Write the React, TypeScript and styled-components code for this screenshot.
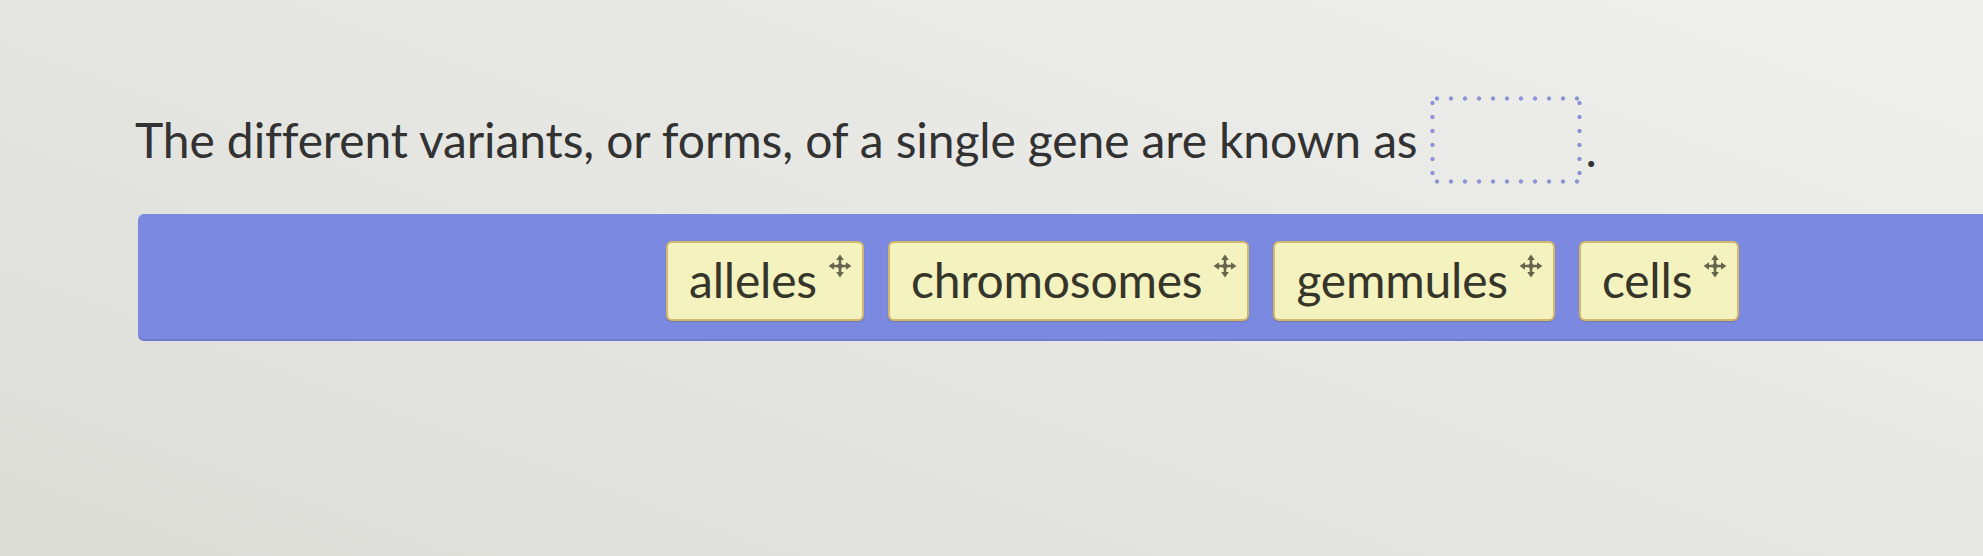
import React from "react";
import styled, { createGlobalStyle } from "styled-components";

const Global = createGlobalStyle`
  html, body { margin: 0; padding: 0; }
  body { font-family: Lato, "Open Sans", sans-serif; overflow: hidden; }
`;

const Page = styled.div`
  width: 1983px;
  height: 556px;
  box-sizing: border-box;
  padding: 96px 0 0 135px;
  background: linear-gradient(200deg, #efefed 0%, #e7e7e4 45%, #dcdcd7 100%);
  display: flex;
  flex-direction: column;
`;

const Question = styled.p`
  margin: 0;
  font-size: 48px;
  line-height: 58px;
  letter-spacing: -0.12px;
  color: #323232;
  display: flex;
  align-items: center;
  white-space: nowrap;
`;

const Blank = styled.span`
  display: inline-block;
  width: 152px;
  height: 88px;
  margin-left: 12px;
  background:
    radial-gradient(circle, #8a94d6 1.8px, transparent 2.4px) 0 0 / 14px 5px repeat-x,
    radial-gradient(circle, #8a94d6 1.8px, transparent 2.4px) 0 100% / 14px 5px repeat-x,
    radial-gradient(circle, #8a94d6 1.8px, transparent 2.4px) 0 0 / 5px 14px repeat-y,
    radial-gradient(circle, #8a94d6 1.8px, transparent 2.4px) 100% 0 / 5px 14px repeat-y;
`;

const Period = styled.span`
  margin-left: 4px;
  align-self: flex-end;
  line-height: 58px;
  margin-bottom: 6px;
`;

const Band = styled.div`
  margin-top: 30px;
  margin-left: 3px;
  height: 127px;
  box-sizing: border-box;
  padding: 27px 0 0 528px;
  background: #7b8ae0;
  border-radius: 6px 0 0 6px;
  box-shadow: inset 0 -2px 0 rgba(70, 80, 150, 0.25);
  display: flex;
  align-items: flex-start;
  gap: 24px;
`;

const Chip = styled.div`
  height: 80px;
  box-sizing: border-box;
  display: flex;
  align-items: flex-start;
  gap: 11px;
  padding: 0 10px 0 21px;
  background: #f4f2bf;
  border: 2px solid #d5b76b;
  border-radius: 6px;
  box-shadow: 0 1px 1px rgba(90, 80, 40, 0.3);
`;

const ChipLabel = styled.span`
  font-size: 48px;
  line-height: 74px;
  letter-spacing: -0.2px;
  color: #35352a;
`;

const Handle = styled.svg`
  margin-top: 11px;
  flex: none;
`;

const MoveIcon = () => (
  <Handle width="24" height="24" viewBox="0 0 22 22">
    <g stroke="#66664f" strokeWidth="2.4" strokeLinecap="round">
      <line x1="11" y1="4" x2="11" y2="18" />
      <line x1="4" y1="11" x2="18" y2="11" />
    </g>
    <g fill="#66664f">
      <polygon points="11,0.5 7.5,5.5 14.5,5.5" />
      <polygon points="11,21.5 7.5,16.5 14.5,16.5" />
      <polygon points="0.5,11 5.5,7.5 5.5,14.5" />
      <polygon points="21.5,11 16.5,7.5 16.5,14.5" />
      <circle cx="11" cy="11" r="2.4" />
    </g>
  </Handle>
);

const words = ["alleles", "chromosomes", "gemmules", "cells"];

export default function App() {
  return (
    <>
      <Global />
      <Page>
        <Question>
          The different variants, or forms, of a single gene are known as
          <Blank />
          <Period>.</Period>
        </Question>
        <Band>
          {words.map((w) => (
            <Chip key={w}>
              <ChipLabel>{w}</ChipLabel>
              <MoveIcon />
            </Chip>
          ))}
        </Band>
      </Page>
    </>
  );
}
